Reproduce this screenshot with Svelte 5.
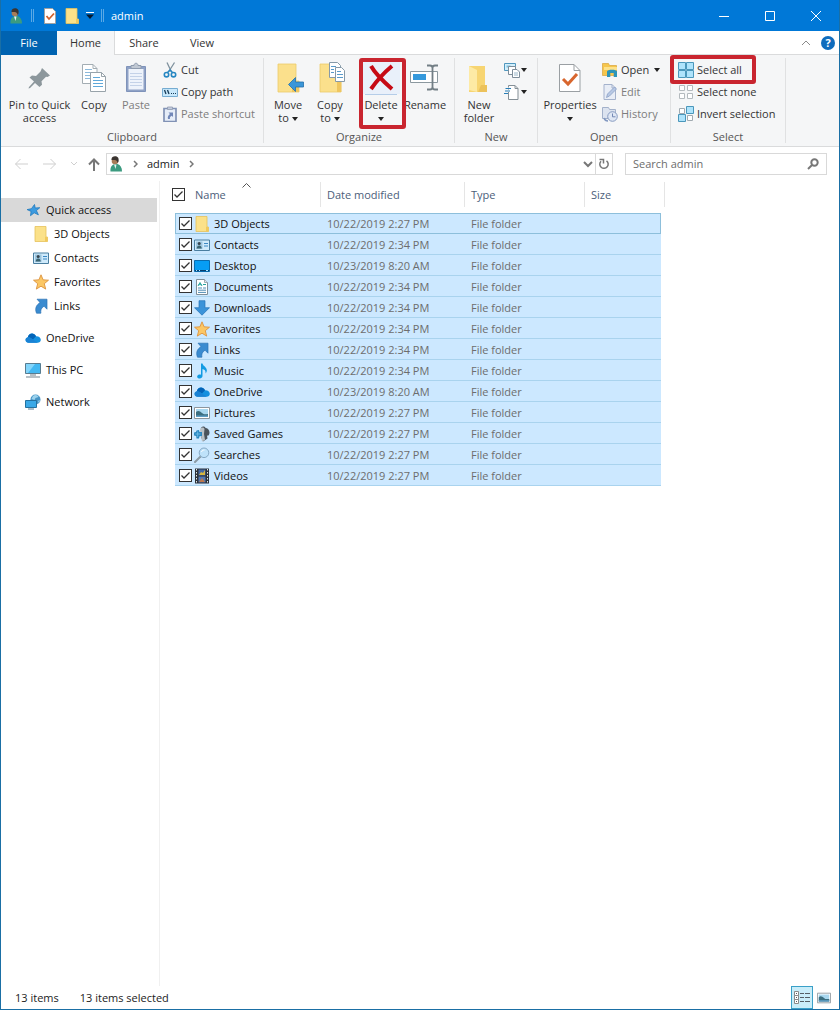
<script>
  const ribbonTabs = ['Home', 'Share', 'View'];
  const quick = [
    ['3D Objects', 'folder'],
    ['Contacts', 'contacts'],
    ['Favorites', 'star'],
    ['Links', 'link'],
  ];
  const places = [
    ['OneDrive', 'cloud'],
    ['This PC', 'pc'],
    ['Network', 'network'],
  ];
  let files = $state([
    { name: '3D Objects', icon: 'folder', date: '10/22/2019 2:27 PM', on: true },
    { name: 'Contacts', icon: 'contacts', date: '10/22/2019 2:34 PM', on: true },
    { name: 'Desktop', icon: 'desktop', date: '10/23/2019 8:20 AM', on: true },
    { name: 'Documents', icon: 'document', date: '10/22/2019 2:34 PM', on: true },
    { name: 'Downloads', icon: 'download', date: '10/22/2019 2:34 PM', on: true },
    { name: 'Favorites', icon: 'star', date: '10/22/2019 2:34 PM', on: true },
    { name: 'Links', icon: 'link', date: '10/22/2019 2:34 PM', on: true },
    { name: 'Music', icon: 'music', date: '10/22/2019 2:34 PM', on: true },
    { name: 'OneDrive', icon: 'cloud', date: '10/23/2019 8:20 AM', on: true },
    { name: 'Pictures', icon: 'picture', date: '10/22/2019 2:27 PM', on: true },
    { name: 'Saved Games', icon: 'games', date: '10/22/2019 2:27 PM', on: true },
    { name: 'Searches', icon: 'search', date: '10/22/2019 2:27 PM', on: true },
    { name: 'Videos', icon: 'video', date: '10/22/2019 2:27 PM', on: true },
  ]);
  let selected = $derived(files.filter((f) => f.on).length);
  const setAll = (value) => files.forEach((f) => (f.on = value));
  const invert = () => files.forEach((f) => (f.on = !f.on));
</script>

{#snippet icon(name)}
  <svg class="i16" viewBox="0 0 16 16" aria-hidden="true">
    {#if name === 'folder'}
      <path d="M2 .5h11v10.500h1.500v4.500H2z" fill="#fbe189" stroke="#e6c25c" stroke-width=".8" />
      <path d="M12 11h2.500v4.500H12z" fill="#f1c95c" />
    {:else if name === 'contacts'}
      <path d="M.5 3h15v10.500H.5z" fill="#cfeafb" stroke="#4a7ea0" />
      <path d="M2 4.500h6.500v7.500H2z" fill="#9cc5de" />
      <circle cx="5.200" cy="6.500" r="1.500" fill="#36454f" />
      <path d="M2.700 11.500c0-4 5-4 5 0z" fill="#3c6470" />
      <path d="M10 6.500h4M10 9h4" stroke="#3b88c4" />
    {:else if name === 'star'}
      <path d="M8 .8l2.100 5 5.400.4-4.200 3.500 1.400 5.400L8 12.200l-4.700 2.900 1.400-5.400L.5 6.200l5.400-.4z" fill="#fbc765" stroke="#dc9340" stroke-width=".9" />
    {:else if name === 'quick'}
      <path d="M9.500 2.500l.7 3.500 4.600-.3-3.400 2.900 2 4.200-4.200-2-3.700 2.900.6-4.300-4-1.800 4.300-.9z" fill="#3c9be0" stroke="#2079bd" stroke-width=".8" />
    {:else if name === 'link'}
      <path d="M4 1.200h10v10l-3-3c-3 2-3.600 4-3.100 7H3.500C1.500 10 3.600 7 7 4.500z" fill="#3a8bd0" stroke="#2c72b4" stroke-width=".7" />
    {:else if name === 'cloud'}
      <path d="M3.800 12.800C-.4 12.800-.5 8 2.800 7.300 3.500 3 9 2 11 6.200c2.700-.2 4.800 1.300 4.800 3.600 0 2-1.400 3-3.300 3z" fill="#1490df" />
      <path d="M2.800 7.300C3.500 3 9 2 11 6.200L8 9.500 5.300 7.800z" fill="#0364b8" />
      <path d="M5.300 7.800l7.400 4.900-9 .1C1 12.600-.3 9.600 1.500 8c1.100-1 2.600-.8 3.800-.2z" fill="#1a82d4" />
    {:else if name === 'pc'}
      <path d="M.5 1.500h15v10H.5z" fill="#43b8f2" stroke="#587c90" />
      <path d="M1 2h9L3 11H1z" fill="#83d5fb" />
      <path d="M5 13h6M1 15h14" stroke="#71818c" />
    {:else if name === 'network'}
      <circle cx="10.500" cy="5.500" r="5" fill="#4795c6" />
      <path d="M8 2c2-2 5-1 5.500 1l-3 1-1 2-3-1zM13 7l2-1-1 3z" fill="#9dd3ed" />
      <path d="M.5 6.500h11v7H.5z" fill="#3aa9e7" stroke="#24719f" />
      <path d="M3 15h6" stroke="#5a7c91" />
    {:else if name === 'desktop'}
      <path d="M.5 2.500h15v11H.5z" fill="#069df4" stroke="#086bae" />
      <path d="M1 12.500h14" stroke="#07406f" />
      <path d="M2 12.500h1M5 12.500h1M12 12.500h2" stroke="#b2e8ff" />
    {:else if name === 'document'}
      <path d="M2.500.5h8L13.500 3.500v12h-11z" fill="#fff" stroke="#7f8e98" />
      <path d="M10.500.5v3h3" fill="#dfe7ed" stroke="#8d9aa3" stroke-width=".8" />
      <path d="M4 7l2-3.500L8 7M4.500 5.700h3M9 5.500h3" fill="none" stroke="#28a39d" />
      <path d="M4 9h4M9 9h3M4 11.200h8M4 13.400h8" stroke="#3c80ad" stroke-width=".9" />
    {:else if name === 'download'}
      <path d="M5 .7h6v7h4.500L8 15.200.5 7.700H5z" fill="#3b93d9" stroke="#2574b7" stroke-width=".7" />
    {:else if name === 'music'}
      <path d="M7 .5h1.500c.5 2.600 4.800 3.700 4.300 7.400-.2 1.300-.8 2-1.400 2.600.7-3-.8-3.700-2.900-4.500V13c0 3.500-6 3-5.300.2.400-1.500 2.300-2.200 3.800-1.500z" fill="#129be3" />
    {:else if name === 'picture'}
      <path d="M.5 2.500h15v11H.5z" fill="#fff" stroke="#8d969d" />
      <path d="M2 4h12v8H2z" fill="#a8d7ef" />
      <path d="M2 7c2-2 4-1 6 1s4 1 6 1v3H2z" fill="#3b6e80" />
      <path d="M2 10.500h12V12H2z" fill="#5d9dc4" />
    {:else if name === 'games'}
      <path d="M7 2c1-2 4-2 4.500 0 2 0 4 2 4 4.500 0 2.500-1 3.500-2.500 3l.5 3-4.500 3L7 11z" fill="#4a535b" />
      <path d="M6 4c0-3 4-3 4.500-1l-.5 5 1 6-3 1.500z" fill="#b9c0c5" />
      <path d="M0 6.500l2-.5.500-1.500L5 4l.5 2L8 6v4l-2.500.3L5 12.500H2.500l-.3-2.500L0 9.500z" fill="#2a88c1" />
      <path d="M3.700 5.500v5.500M1.500 8h5" stroke="#73c0e8" stroke-width=".8" />
    {:else if name === 'search'}
      <path d="M6.500 9.500L1 15" stroke="#8b9aa5" stroke-width="2" stroke-linecap="round" />
      <circle cx="10" cy="5.800" r="4.800" fill="#bfe2fa" stroke="#86a9c5" />
      <path d="M7.500 5C8 3.500 9 3 10.500 3" fill="none" stroke="#fff" />
    {:else if name === 'video'}
      <path d="M1 .5h14v15H1z" fill="#2b3138" />
      <path d="M2.500 1v14M13.500 1v14" stroke="#e0e6e9" stroke-dasharray="1.500 1.500" />
      <path d="M4.500 1.500h7v6h-7z" fill="#4468a5" />
      <path d="M4.500 8.500h7v6h-7z" fill="#5279b4" />
      <path d="M5 7l2-3 2 1 2-3v5z" fill="#d5b740" />
      <path d="M5 14l3-4 3 4z" fill="#bf784b" />
    {:else if name === 'user'}
      <path d="M2.500 15.500c-.5-4.500 1.500-7 4.500-7.500h2.500c3 1 4.500 3.500 4.500 7.500z" fill="#3c9b80" />
      <circle cx="7" cy="5" r="3.300" fill="#a77c58" />
      <path d="M3.500 4C3 0 8-.8 10 1.500c1 1.500.8 4-.3 5.500-.5-2-1.500-3-3-3z" fill="#3b3430" />
      <path d="M6 8.500h2.500L7.500 13z" fill="#e9f2f0" />
    {:else if name === 'props'}
      <path d="M2.500.5h8L13.500 3.500v12h-11z" fill="#fff" stroke="#a2a2a2" />
      <path d="M4.500 8l2.500 3L12 5.500" fill="none" stroke="#d0602c" stroke-width="1.800" />
    {:else if name === 'cut'}
      <path d="M5 .5l4.500 9.500M12.500 .5L6.500 10" stroke="#7f919d" stroke-width="1.300" />
      <circle cx="4.500" cy="12.700" r="2.200" fill="none" stroke="#2687c2" stroke-width="1.600" />
      <circle cx="11.500" cy="12.700" r="2.200" fill="none" stroke="#2687c2" stroke-width="1.600" />
      <path d="M5.500 10.500L8 8l2.500 2.500" fill="none" stroke="#2687c2" stroke-width="1.500" />
    {:else if name === 'path'}
      <path d="M.5 4.500h15v8H.5z" fill="#c8e8fb" stroke="#76acd1" />
      <path d="M2.500 6l1.500 4M5.500 6L7 10" stroke="#173b58" stroke-width="1.300" />
      <path d="M9 9.500h1M11 9.500h1M13 9.500h1" stroke="#173b58" />
    {:else if name === 'shortcut'}
      <path d="M2 2.500h12v13H2z" fill="#e6edf8" stroke="#8192b5" stroke-width="1.700" />
      <path d="M5.500 1h5v2.500h-5z" fill="#c3ccdc" stroke="#8f9bb1" stroke-width=".8" />
      <path d="M6.500 6.500H11v4.500L9.700 9.700C8 10.500 7.500 11.500 8 13H6c-.7-2 .3-3.700 2-5z" fill="#7187b8" />
    {:else if name === 'newitem'}
      <path d="M.5 1.500h11v7H.5z" fill="#d4effb" stroke="#5097be" />
      <path d="M2.500 3.500h4v2h-4z" fill="#7dbedf" />
      <path d="M4.500 4.500h7v8h-7z" fill="#fff" stroke="#7e8d99" />
      <path d="M8.500 7.500h4.500l2.500 2.500v5.500h-7z" fill="#fff" stroke="#7e8d99" />
      <path d="M10 11h4M10 13h4" stroke="#9ab6c8" />
    {:else if name === 'easy'}
      <path d="M4.500 1.500H11l3 3v11H4.500z" fill="#fff" stroke="#858f96" />
      <path d="M11 1.500v3h3" fill="none" stroke="#858f96" />
      <path d="M1.500 4.500H7M1 7h5M0 9.500h4" stroke="#f5f6f7" stroke-width="2" />
      <path d="M1.500 4.500H7M1 7h5M0 9.500h4" stroke="#287eb7" stroke-width="1.200" />
    {:else if name === 'open'}
      <path d="M.5 1.500h6l1 2h7v10H.5z" fill="#f6c64c" stroke="#d8a439" stroke-width=".7" />
      <path d="M2 5h13v3H2z" fill="#fde28b" />
      <path d="M5 15V9.500C5 7 15 7 15 9.500V15h-3.300v-4H8.300v4z" fill="#2c95b9" />
    {:else if name === 'edit'}
      <path d="M2 .5h8L13.500 4v11.500H2z" fill="#e8edf6" stroke="#a4b2cc" />
      <path d="M10 .5V4h3.500" fill="none" stroke="#a4b2cc" />
      <path d="M4.500 13.500l1-3.500 7-7 2 2-7 7z" fill="#b7c8e4" stroke="#8b9fc5" stroke-width=".8" />
    {:else if name === 'history'}
      <path d="M.5 1.500h6l1 2h6v9H.5z" fill="#dce3ef" stroke="#a3b1ca" />
      <circle cx="10.500" cy="10.500" r="4.800" fill="#dfe7f4" stroke="#879bc1" />
      <path d="M10.500 7.500v3.300h3" fill="none" stroke="#7288b4" />
      <path d="M2 12c1 3 3 3 4 3" fill="none" stroke="#8399c1" stroke-width="1.600" />
    {:else if name === 'all'}
      <path d="M.5.5h7v7h-7zM8.500.5h7v7h-7zM.5 8.500h7v7h-7zM8.500 8.500h7v7h-7z" fill="#aee3fb" stroke="#4a97bb" />
    {:else if name === 'none'}
      <path d="M1.500 1.500h5v5h-5zM9.500 1.500h5v5h-5zM1.500 9.500h5v5h-5zM9.500 9.500h5v5h-5z" fill="#fff" stroke="#b4babe" />
    {:else if name === 'invert'}
      <path d="M1.500 2.500h5v5h-5zM9.500 9.500h5v5h-5z" fill="#fff" stroke="#a0aab0" />
      <path d="M8.500.5h7v7h-7zM.5 8.500h7v7h-7z" fill="#aee3fb" stroke="#4a97bb" />
    {/if}
  </svg>
{/snippet}

{#snippet big(name)}
  <svg class="i32" viewBox="0 0 32 32" aria-hidden="true">
    {#if name === 'pin'}
      <path d="M18 6l8 7.500-2.500 1.500-1.500-.3-4.500 4.500.5 3.500-2.500 2.300-4.500-4L6 26l-1.500.5.5-1.500 5-5.500-4.500-4 2.500-2 4 .5 4.500-4.500z" fill="#8c979c" />
    {:else if name === 'copy'}
      <path d="M4.500 2.500H15l4 4v15H4.500z" fill="#fff" stroke="#a3adb3" />
      <path d="M15 2.500v4h4" fill="none" stroke="#a3adb3" />
      <path d="M7 7.500h7M7 10.500h9M7 13.500h9M7 16.500h9" stroke="#8bb9db" />
      <path d="M12.500 10.500h11l4 4v15h-15z" fill="#fff" stroke="#98a3aa" />
      <path d="M23.500 10.500v4h4" fill="none" stroke="#98a3aa" />
      <path d="M15 15.500h7M15 18.500h10M15 21.500h10M15 24.500h10" stroke="#5fa8d9" />
    {:else if name === 'paste'}
      <path d="M6.500 4.500h19v25h-19z" fill="#8fa2c6" stroke="#7f93ba" />
      <path d="M8.500 7h15v20.500h-15z" fill="#eef3fb" />
      <path d="M11 6.500v-3h3c0-3 4-3 4 0h3v3z" fill="#c0c8d3" stroke="#8f9bad" />
      <path d="M10 11.500h12M10 14.500h12M10 17.500h12M10 20.500h12M10 23.500h12" stroke="#c4d2e8" />
    {:else if name === 'move'}
      <path d="M6 2h18v17h3v11H6z" fill="#fbe08c" stroke="#eccb6b" stroke-width=".8" />
      <path d="M20 24h7v6h-7z" fill="#efc65f" />
      <path d="M16.500 22.500l7-7v4.500h8v5h-8v4.500z" fill="#3a96d8" stroke="#2470aa" stroke-width=".8" />
    {:else if name === 'copyto'}
      <path d="M6 2h18v17h3v11H6z" fill="#fbe08c" stroke="#eccb6b" stroke-width=".8" />
      <path d="M23 19h4.300v11H23z" fill="#efc65f" />
      <path d="M15.500.5h8l3 3v12h-11z" fill="#fff" stroke="#879aa8" />
      <path d="M21.500 5.500h6l3 3v11h-9z" fill="#fff" stroke="#879aa8" />
      <path d="M17 4.500h5M17 7.500h3M17 10.500h3M23 9.500h4M23 12.500h6M23 15.500h6" stroke="#5a9bca" />
    {:else if name === 'delete'}
      <path d="M6 4q5 9 21 23M27 4Q15 14 6 27" fill="none" stroke="#c60a15" stroke-width="4" />
    {:else if name === 'rename'}
      <path d="M1.500 9.500h27v11h-27z" fill="#fff" stroke="#8b989f" />
      <path d="M4 12h13v6H4z" fill="#3599dc" />
      <path d="M18 3.500h3q2.500 0 2.500 2.500v19q0 2.500-2.500 2.500h-3M29 3.500h-3q-2.500 0-2.500 2.500v19q0 2.500 2.500 2.500h3" fill="none" stroke="#727e85" stroke-width="1.800" />
    {:else if name === 'newfolder'}
      <path d="M6 4h16v21h2v5H6z" fill="#f7d572" />
      <path d="M6 4l8 4v22l-8-2z" fill="#fdeaa5" />
      <path d="M18 23h6v7h-9z" fill="#ecc25b" />
    {:else if name === 'properties'}
      <path d="M5.500 2.500H20l6 6v21H5.500z" fill="#fff" stroke="#9a9fa3" />
      <path d="M20 2.500v6h6" fill="none" stroke="#9a9fa3" />
      <path d="M9 17l5 5 9-10" fill="none" stroke="#d8662e" stroke-width="3" />
    {/if}
  </svg>
{/snippet}

{#snippet caret()}
  <svg class="caret" viewBox="0 0 6 4" aria-hidden="true"><path d="M0 0h6L3 4z" fill="currentColor" /></svg>
{/snippet}

{#snippet small(name, label, action)}
  <button class="small" onclick={action}>{@render icon(name)}<span>{label}</span></button>
{/snippet}

<main class="window">
  <header class="title">
    {@render icon('user')}
    <span class="bar"></span>
    <button class="quick-btn" aria-label="Properties">{@render icon('props')}</button>
    <button class="quick-btn" aria-label="New folder">{@render icon('folder')}</button>
    <button class="customize" aria-label="Customize Quick Access Toolbar">
      <svg width="8" height="7" viewBox="0 0 8 7"><path d="M0 .5h8" stroke="#fff" /><path d="M0 2.500h8L4 7z" fill="#05182e" /></svg>
    </button>
    <span class="bar"></span>
    <h1>admin</h1>
    <div class="controls">
      <button aria-label="Minimize"><svg width="10" height="10" viewBox="0 0 10 10"><path d="M0 5.500h10" /></svg></button>
      <button aria-label="Maximize"><svg width="10" height="10" viewBox="0 0 10 10"><path d="M.5.5h9v9h-9z" /></svg></button>
      <button aria-label="Close"><svg width="10" height="10" viewBox="0 0 10 10"><path d="M0 0l10 10M10 0L0 10" /></svg></button>
    </div>
  </header>

  <nav class="tabs" aria-label="Ribbon tabs">
    <button class="file">File</button>
    {#each ribbonTabs as tab}
      <button class:active={tab === 'Home'}>{tab}</button>
    {/each}
    <div class="tab-end">
      <button aria-label="Collapse the ribbon">
        <svg width="10" height="6" viewBox="0 0 10 6"><path d="M1 5l4-4 4 4" fill="none" stroke="#8a8a8a" /></svg>
      </button>
      <button class="help" aria-label="Help">?</button>
    </div>
  </nav>

  <section class="ribbon" aria-label="Ribbon">
    <div class="group clipboard">
      <div class="tools">
        <button class="big pin">{@render big('pin')}<span>Pin to Quick<br />access</span></button>
        <button class="big narrow">{@render big('copy')}<span>Copy</span></button>
        <button class="big paste" disabled>{@render big('paste')}<span>Paste</span></button>
        <div class="stack">
          {@render small('cut', 'Cut')}
          {@render small('path', 'Copy path')}
          <button class="small" disabled>{@render icon('shortcut')}<span>Paste shortcut</span></button>
        </div>
      </div>
      <h2>Clipboard</h2>
    </div>
    <div class="group organize">
      <div class="tools">
        <button class="big mid">{@render big('move')}<span>Move<br />to {@render caret()}</span></button>
        <button class="big mid">{@render big('copyto')}<span>Copy<br />to {@render caret()}</span></button>
        <button class="big delete">{@render big('delete')}<span>Delete<br />{@render caret()}</span></button>
        <button class="big rename">{@render big('rename')}<span>Rename</span></button>
      </div>
      <h2>Organize</h2>
    </div>
    <div class="group new">
      <div class="tools">
        <button class="big newfolder">{@render big('newfolder')}<span>New<br />folder</span></button>
        <div class="stack">
          <button class="small" aria-label="New item">{@render icon('newitem')}{@render caret()}</button>
          <button class="small" aria-label="Easy access">{@render icon('easy')}{@render caret()}</button>
        </div>
      </div>
      <h2>New</h2>
    </div>
    <div class="group open">
      <div class="tools">
        <button class="big props">{@render big('properties')}<span>Properties<br />{@render caret()}</span></button>
        <div class="stack">
          <button class="small">{@render icon('open')}<span>Open</span>{@render caret()}</button>
          <button class="small" disabled>{@render icon('edit')}<span>Edit</span></button>
          <button class="small" disabled>{@render icon('history')}<span>History</span></button>
        </div>
      </div>
      <h2>Open</h2>
    </div>
    <div class="group select">
      <div class="tools">
        <div class="stack">
          <div class="marked">{@render small('all', 'Select all', () => setAll(true))}</div>
          {@render small('none', 'Select none', () => setAll(false))}
          {@render small('invert', 'Invert selection', invert)}
        </div>
      </div>
      <h2>Select</h2>
    </div>
  </section>

  <div class="nav">
    <button class="faint" aria-label="Back"><svg width="14" height="12" viewBox="0 0 14 12"><path d="M14 6H1.500M6.500 1l-5 5 5 5" /></svg></button>
    <button class="faint" aria-label="Forward"><svg width="14" height="12" viewBox="0 0 14 12"><path d="M0 6h12.500M7.500 1l5 5-5 5" /></svg></button>
    <button class="faint recent" aria-label="Recent locations"><svg width="6" height="4" viewBox="0 0 6 4"><path d="M0 0l3 3 3-3" /></svg></button>
    <button class="up" aria-label="Up"><svg width="12" height="13" viewBox="0 0 12 13"><path d="M6 13V1.500M1 6.500l5-5 5 5" /></svg></button>
    <div class="address">
      {@render icon('user')}
      <svg class="sep" width="5" height="8" viewBox="0 0 5 8"><path d="M1 1l3 3-3 3" /></svg>
      <button class="crumb">admin</button>
      <svg class="sep" width="5" height="8" viewBox="0 0 5 8"><path d="M1 1l3 3-3 3" /></svg>
      <button class="drop" aria-label="Previous locations"><svg width="10" height="7" viewBox="0 0 10 7"><path d="M1 1l4 4 4-4" /></svg></button>
      <button class="refresh" aria-label="Refresh">
        <svg width="12" height="12" viewBox="0 0 12 12"><path d="M8.500 2.800A4.200 4.200 0 1 1 3 3.200M1.500 1.500h4v4" /></svg>
      </button>
    </div>
    <label class="search">
      <input type="text" placeholder="Search admin" aria-label="Search admin" />
      <svg width="12" height="12" viewBox="0 0 12 12"><circle cx="7.500" cy="4.500" r="3.200" /><path d="M5 7L1 11" /></svg>
    </label>
  </div>

  <div class="body">
    <aside>
      <a class="current" href="#quick">{@render icon('quick')}Quick access</a>
      {#each quick as [name, glyph]}
        <a class="child" href="#{glyph}">{@render icon(glyph)}{name}</a>
      {/each}
      {#each places as [name, glyph]}
        <a class="place" href="#{glyph}">{@render icon(glyph)}{name}</a>
      {/each}
    </aside>

    <section class="files" aria-label="Files">
      <table>
        <colgroup><col class="c-name" /><col class="c-date" /><col class="c-type" /><col class="c-size" /></colgroup>
        <thead>
          <tr>
            <th>
              <div class="head">
                <input type="checkbox" aria-label="Select all items" checked={selected === files.length} onchange={(e) => setAll(e.currentTarget.checked)} />
                Name
                <svg class="sort" width="9" height="5" viewBox="0 0 9 5"><path d="M.5 4.500l4-4 4 4" fill="none" stroke="#555" /></svg>
              </div>
            </th>
            <th>Date modified</th>
            <th>Type</th>
            <th>Size</th>
          </tr>
        </thead>
        <tbody>
          {#each files as file, i}
            <tr class:on={file.on} class:focused={i === 0}>
              <td>
                <label class="cell"><input type="checkbox" bind:checked={file.on} />{@render icon(file.icon)}<span>{file.name}</span></label>
              </td>
              <td>{file.date}</td>
              <td>File folder</td>
              <td></td>
            </tr>
          {/each}
        </tbody>
      </table>
    </section>
  </div>

  <footer>
    <span>{files.length} items</span>
    <span>{selected} items selected</span>
    <div class="views">
      <button class="details" aria-label="Details view">
        <svg width="16" height="14" viewBox="0 0 16 14">
          <path d="M.5.5h4v4h-4zM.5 4.500h4v4h-4zM.5 8.500h4v4h-4z" fill="#fff" stroke="#8a8a8a" />
          <path d="M2 2.500h1M2 6.500h1M2 10.500h1M6 2.500h4M11 2.500h5M6 6.500h4M11 6.500h5M6 10.500h4M11 10.500h5" stroke="#555f66" />
        </svg>
      </button>
      <button class="thumbs" aria-label="Large icons view">{@render icon('picture')}</button>
    </div>
  </footer>
</main>

<style>
  :global(body) {
    margin: 0;
    background: #fff;
  }
  .window {
    box-sizing: border-box;
    display: flex;
    flex-direction: column;
    min-height: 100vh;
    border: 1px solid #1a6fa5;
    border-top: 0;
    background: #fff;
    color: #1a1a1a;
    font: 11px/16px "Open Sans", "Noto Sans", sans-serif;
  }
  button {
    padding: 0;
    border: 0;
    background: none;
    color: inherit;
    font: inherit;
  }
  h1,
  h2 {
    margin: 0;
    font-size: 11px;
    font-weight: 400;
  }
  svg {
    display: block;
    flex: none;
  }
  .i16 {
    width: 16px;
    height: 16px;
  }
  .i32 {
    width: 32px;
    height: 32px;
  }
  .caret {
    display: inline-block;
    width: 6px;
    height: 4px;
    vertical-align: middle;
    color: #222;
  }

  .title {
    display: flex;
    align-items: center;
    height: 31px;
    padding-left: 7px;
    background: #0078d7;
    color: #fff;
  }
  .title .bar {
    box-sizing: border-box;
    width: 3px;
    height: 13px;
    margin: 0 7px;
    border: 1px solid #5aa9e6;
    border-width: 0 1px;
  }
  .quick-btn {
    margin: 0 6px 0 1px;
  }
  .quick-btn + .quick-btn {
    margin-left: 0;
  }
  .customize {
    display: flex;
  }
  .controls {
    display: flex;
    align-self: stretch;
    margin-left: auto;
  }
  .controls button {
    display: grid;
    place-items: center;
    width: 46px;
  }
  .controls path {
    fill: none;
    stroke: #fff;
  }

  .tabs {
    display: flex;
    height: 24px;
    box-shadow: inset 0 -1px #dadbdc;
    color: #333;
  }
  .tabs > button {
    width: 58px;
  }
  .tabs > .file {
    width: 56px;
    background: #0063b1;
    color: #fff;
  }
  .tabs > .active {
    border-right: 1px solid #dadbdc;
    background: #f5f6f7;
  }
  .tab-end {
    display: flex;
    align-items: center;
    gap: 10px;
    margin-left: auto;
    padding-right: 4px;
  }
  .tab-end .help {
    width: 14px;
    height: 14px;
    border-radius: 50%;
    background: #0f6cbd;
    color: #fff;
    font-weight: 700;
    line-height: 14px;
  }

  .ribbon {
    display: flex;
    height: 91px;
    border-bottom: 1px solid #dadbdc;
    background: #f5f6f7;
    color: #333;
  }
  .group {
    box-sizing: border-box;
    display: flex;
    flex: none;
    flex-direction: column;
    justify-content: space-between;
    margin: 3px 0;
    border-right: 1px solid #e0e1e2;
  }
  .group h2 {
    color: #555;
    line-height: 12px;
    text-align: center;
  }
  .tools {
    display: flex;
  }
  .clipboard {
    width: 263px;
  }
  .organize {
    width: 191px;
  }
  .organize .tools {
    padding-left: 3px;
  }
  .new {
    width: 83px;
  }
  .open {
    width: 133px;
  }
  .select {
    width: 115px;
  }
  .select .tools {
    padding-left: 7px;
  }
  .big {
    display: flex;
    flex: none;
    flex-direction: column;
    align-items: center;
    padding-top: 4px;
    line-height: 13px;
    white-space: nowrap;
  }
  .big span {
    margin-top: 4px;
  }
  .pin {
    width: 77px;
  }
  .narrow {
    width: 32px;
  }
  .paste {
    width: 52px;
  }
  .mid {
    width: 42px;
  }
  .big.delete {
    position: relative;
    width: 38px;
    margin-left: 11px;
  }
  .delete .i32 {
    background: #e9f0fa;
    box-shadow: 0 1px #b5cde8, 3px 0 #e9f0fa, -3px 0 #e9f0fa;
  }
  .delete::after {
    content: "";
    position: absolute;
    inset: 0 -6px -5px -3px;
    border: 4px solid #c9252f;
    border-radius: 3px;
  }
  .rename {
    width: 50px;
  }
  .newfolder {
    width: 48px;
  }
  .props {
    width: 64px;
  }
  button:disabled {
    color: #7d7d7d;
  }
  .stack {
    padding-top: 1px;
  }
  .small {
    display: flex;
    align-items: center;
    gap: 3px;
    height: 22px;
    white-space: nowrap;
  }
  .small span + .caret {
    margin-left: 2px;
  }
  .new .small {
    padding-left: 1px;
    gap: 1px;
  }
  .marked {
    position: relative;
  }
  .marked::after {
    content: "";
    position: absolute;
    inset: -4px 19px -3px -8px;
    border: 4px solid #c9252f;
    border-radius: 3px;
    pointer-events: none;
  }

  .nav {
    display: flex;
    align-items: center;
    height: 34px;
    padding: 0 12px 0 13px;
  }
  .nav svg:not(.i16) path,
  .nav circle:only-of-type:first-child {
    fill: none;
    stroke: #777;
    stroke-width: 2;
  }
  .nav button {
    display: flex;
  }
  .nav .faint {
    margin-right: 15px;
  }
  .nav .faint svg:not(.i16) path {
    stroke: #cfcfcf;
    stroke-width: 1;
  }
  .nav .recent {
    margin: 0 11px 0 -1px;
  }
  .up {
    margin-right: 6px;
  }
  .address {
    box-sizing: border-box;
    display: flex;
    flex: 1;
    align-items: center;
    gap: 9px;
    height: 22px;
    margin-right: 12px;
    padding-left: 1px;
    border: 1px solid #d9d9d9;
  }
  .address .drop {
    margin-left: auto;
    margin-right: -7px;
  }
  .address .refresh {
    align-items: center;
    align-self: stretch;
    padding: 0 2px;
    border-left: 1px solid #d9d9d9;
  }
  .address .refresh svg:not(.i16) path,
  .address .sep:not(.i16) path {
    stroke-width: 1.5;
  }
  .search {
    box-sizing: border-box;
    display: flex;
    align-items: center;
    width: 202px;
    height: 22px;
    padding: 0 7px;
    border: 1px solid #d9d9d9;
  }
  .search input {
    flex: 1;
    min-width: 0;
    padding: 0;
    border: 0;
    outline: 0;
    background: none;
    font: inherit;
  }
  .search input::placeholder {
    color: #6d6d6d;
    opacity: 1;
  }

  .body {
    display: flex;
    flex: 1;
  }
  aside {
    flex: none;
    width: 158px;
    padding-top: 17px;
    border-right: 1px solid #f0f0f0;
  }
  aside a {
    display: flex;
    align-items: center;
    gap: 5px;
    height: 24px;
    margin-right: 2px;
    padding-left: 24px;
    color: #111;
    text-decoration: none;
  }
  aside .current {
    background: #d9d9d9;
  }
  aside .child {
    padding-left: 32px;
  }
  aside .place {
    margin-top: 8px;
  }

  .files {
    flex: 1;
    padding: 1px 0 0 12px;
  }
  table {
    width: 493px;
    table-layout: fixed;
    border-spacing: 0;
  }
  .c-name {
    width: 149px;
  }
  .c-date {
    width: 144px;
  }
  .c-type {
    width: 120px;
  }
  .c-size {
    width: 80px;
  }
  th,
  td {
    box-sizing: border-box;
    padding: 0 0 0 6px;
    font-weight: 400;
    text-align: left;
  }
  th {
    height: 25px;
    border-right: 1px solid #e5e5e5;
    color: #4c607a;
  }
  th:first-child,
  td:first-child {
    padding-left: 0;
  }
  tbody::before {
    content: "";
    display: block;
    height: 6px;
  }
  td {
    height: 21px;
    background-clip: padding-box;
    color: #6d6d6d;
  }
  td:first-child {
    border-left: 3px solid transparent;
  }
  td:last-child {
    border-right: 4px solid transparent;
  }
  .on td {
    background-color: #cce8ff;
    box-shadow: inset 0 -1px #a9d3ee;
  }
  .focused td {
    box-shadow: inset 0 1px #8dbfdb, inset 0 -1px #8dbfdb;
  }
  .focused td:first-child {
    box-shadow: inset 1px 1px #8dbfdb, inset 0 -1px #8dbfdb;
  }
  .focused td:last-child {
    box-shadow: inset -1px 1px #8dbfdb, inset 0 -1px #8dbfdb;
  }
  .head {
    position: relative;
    display: flex;
    align-items: center;
    gap: 10px;
  }
  .sort {
    position: absolute;
    top: -4px;
    left: 70px;
  }
  .cell {
    display: flex;
    align-items: center;
    padding-left: 4px;
    color: #111;
  }
  .cell .i16 {
    margin: 0 4px 0 2px;
  }
  input[type="checkbox"] {
    appearance: none;
    box-sizing: border-box;
    flex: none;
    width: 13px;
    height: 13px;
    margin: 0;
    border: 1px solid #333;
    background: #fff;
  }
  input[type="checkbox"]:checked {
    background: #fff url("data:image/svg+xml,%3Csvg xmlns='http://www.w3.org/2000/svg' viewBox='0 0 11 11'%3E%3Cpath d='M1.500 5.500l2.500 2.500 5.500-5.500' fill='none' stroke='%23333' stroke-width='1.300'/%3E%3C/svg%3E");
  }

  footer {
    display: flex;
    align-items: center;
    gap: 21px;
    height: 23px;
    padding-left: 14px;
    color: #222;
  }
  .views {
    display: flex;
    gap: 4px;
    margin-left: auto;
    padding-right: 8px;
  }
  .views button {
    display: grid;
    place-items: center;
  }
  .thumbs .i16 {
    width: 14px;
    height: 14px;
  }
  .views .details {
    box-sizing: border-box;
    width: 22px;
    height: 23px;
    border: 1px solid #3aa0c8;
    background: #c9edf9;
  }
</style>
